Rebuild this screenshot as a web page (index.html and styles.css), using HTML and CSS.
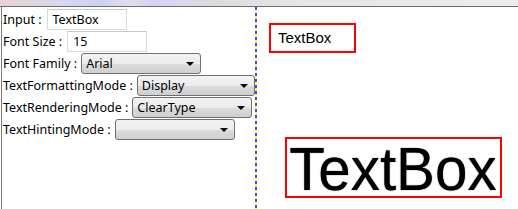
FILE: index.html
```html
<!DOCTYPE html>
<html lang="en">
<head>
  <meta charset="UTF-8">
  <title>TextBox Rendering</title>
  <link rel="stylesheet" href="styles.css">
</head>
<body>
  <div class="toolbar"></div>
  <div class="main">
    <div class="panel">
      <div class="row">
        <span class="label">Input :</span>
        <div class="textbox">TextBox</div>
      </div>
      <div class="row">
        <span class="label">Font Size :</span>
        <div class="textbox">15</div>
      </div>
      <div class="row">
        <span class="label">Font Family :</span>
        <div class="combo">Arial</div>
      </div>
      <div class="row">
        <span class="label">TextFormattingMode :</span>
        <div class="combo">Display</div>
      </div>
      <div class="row">
        <span class="label">TextRenderingMode :</span>
        <div class="combo">ClearType</div>
      </div>
      <div class="row">
        <span class="label">TextHintingMode :</span>
        <div class="combo"></div>
      </div>
    </div>
    <div class="divider"></div>
    <div class="canvas">
      <div class="preview-small">TextBox</div>
      <div class="preview-big"><span>TextBox</span></div>
    </div>
  </div>
</body>
</html>
```

FILE: styles.css
```css
body { margin: 0; background: white; font-family: "Noto Sans", "DejaVu Sans", sans-serif; font-size: 12.5px; color: #000; }
.toolbar {
  height: 6px;
  border-bottom: 1px solid #6e6e6e;
  background: linear-gradient(to right, #e8d4d8 0, #dcd6dc 40px, #d8d8f0 60px, #cfcff4 100px, #e0e0e8 130px, #d4d4f2 150px, #d8d8f0 185px, #dcdcdc 220px, #e6e6e6 300px, #ececec 518px);
}
.main { display: flex; height: 202px; }
.panel {
  width: 253px;
  margin-left: 1px;
  border-left: 1px solid #7a7a7a;
  padding-top: 1px;
}
.row { display: flex; align-items: center; height: 22px; }
.label { padding-left: 1px; white-space: pre; }
.textbox {
  box-sizing: border-box;
  width: 80px;
  height: 21px;
  border: 1px solid #dadada;
  border-top-color: #c8c8c8;
  padding: 1px 5px;
  line-height: 18px;
  margin-left: 5px;
}
.combo {
  box-sizing: border-box;
  position: relative;
  width: 120px;
  height: 21px;
  margin-left: 4px;
  padding: 0 4px;
  line-height: 19px;
  border: 1px solid #707070;
  border-radius: 3px;
  background: linear-gradient(#f3f3f3, #ebebeb 50%, #dddddd 51%, #cfcfcf);
}
.combo::after {
  content: "";
  position: absolute;
  right: 6px;
  top: 8px;
  border-left: 4px solid transparent;
  border-right: 4px solid transparent;
  border-top: 4px solid #000;
}
.divider {
  width: 2px;
  background: repeating-linear-gradient(#4848f0 0, #4848f0 3px, #f8f850 3px, #f8f850 6px);
}
.canvas { flex: 1; display: flex; flex-direction: column; align-items: flex-start; }
.preview-small {
  box-sizing: border-box;
  width: 87px;
  height: 30px;
  margin: 16px 0 0 12px;
  border: 2px solid #f00;
  padding-left: 7px;
  font-family: "Liberation Sans", Arial, sans-serif;
  font-size: 15px;
  line-height: 26px;
}
.preview-big {
  box-sizing: border-box;
  width: 217px;
  height: 61px;
  margin: 84px 0 0 28px;
  border: 2px solid #f00;
  font-family: "Liberation Sans", Arial, sans-serif;
}
.preview-big span {
  display: block;
  font-size: 54px;
  line-height: 54px;
  padding-left: 2px;
  transform: scale(1.08, 1.14);
  transform-origin: left top;
  margin-top: -1px;
  filter: blur(0.6px);
  text-shadow: 0 0 1px #222;
}
```
